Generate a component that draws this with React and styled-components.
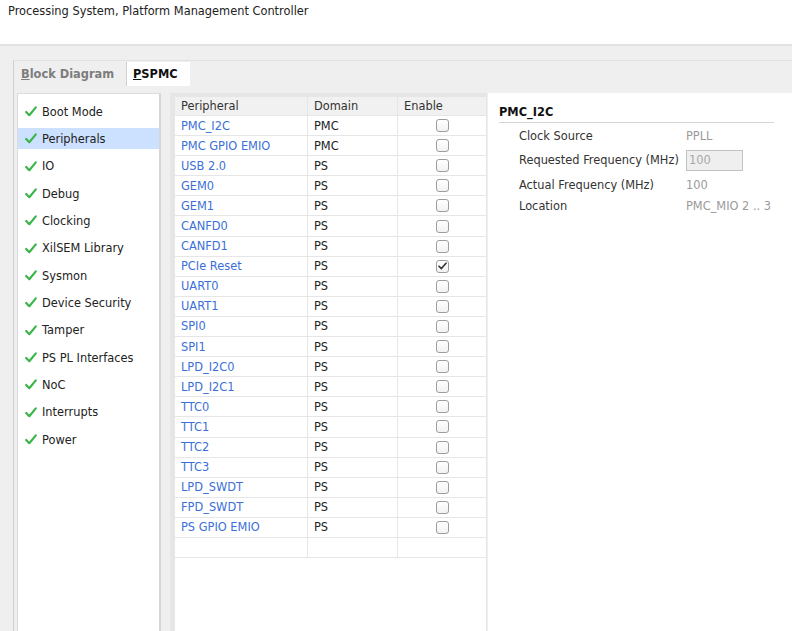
import React from "react";
import styled, { createGlobalStyle } from "styled-components";

const GlobalStyle = createGlobalStyle`
  html, body { margin: 0; padding: 0; }
  body {
    font-family: "DejaVu Sans", "Liberation Sans", sans-serif;
    font-size: 11.4px;
    color: #222;
    background: #efefef;
  }
`;

const Page = styled.div`
  width: 792px;
  height: 631px;
  overflow: hidden;
  display: flex;
  flex-direction: column;
  background: #efefef;
`;

const Header = styled.div`
  height: 46px;
  background: #fff;
  border-bottom: 2px solid #e2e2e2;
  padding: 3px 8px 0;
  box-sizing: border-box;
  line-height: 16px;
  color: #222;
`;

const Body = styled.div`
  flex: 1;
  padding: 14px 0 0 13px;
  display: flex;
  flex-direction: column;
  min-height: 0;
`;

const TabFrame = styled.div`
  flex: 1;
  border-left: 1px solid #cfcfcf;
  border-top: 1px solid #e2e2e2;
  display: flex;
  flex-direction: column;
  min-height: 0;
`;

const TabBar = styled.div`
  height: 25px;
  display: flex;
  align-items: stretch;
  padding-top: 1px;
  box-sizing: border-box;
`;

const Tab = styled.div`
  display: flex;
  align-items: center;
  white-space: nowrap;
  padding-left: ${(p) => (p.$active ? "6px" : "7px")};
  width: ${(p) => (p.$active ? "64px" : "112px")};
  box-sizing: border-box;
  background: ${(p) => (p.$active ? "#fff" : "transparent")};
  color: ${(p) => (p.$active ? "#111" : "#7d7d7d")};
  font-weight: bold;
  border-left: ${(p) => (p.$active ? "1px solid #cfcfcf" : "none")};
  u { text-decoration: underline; }
`;

const TabBody = styled.div`
  flex: 1;
  display: flex;
  padding: 7px 0 0 3px;
  min-height: 0;
`;

const NavPanel = styled.div`
  width: 144px;
  box-sizing: border-box;
  background: #fff;
  border: 1px solid #dcdcdc;
  border-right: 2px solid #d6d6d6;
  border-bottom: none;
  padding-top: 7px;
`;

const NavItem = styled.div`
  height: 21px;
  margin-bottom: 6.35px;
  display: flex;
  align-items: center;
  padding-left: 7px;
  gap: 5px;
  background: ${(p) => (p.$selected ? "#cce0ff" : "transparent")};
  color: #222;
`;

const CheckIcon = styled.svg`
  width: 12px;
  height: 11px;
  flex: none;
`;

const TablePanel = styled.div`
  margin-left: 9px;
  width: 317px;
  box-sizing: border-box;
  background: #e6e6e6;
  padding: 4px 1px 0 5px;
  display: flex;
  flex-direction: column;
`;

const Table = styled.div`
  flex: 1;
  background: #fff;
  display: flex;
  flex-direction: column;
`;

const Row = styled.div`
  display: grid;
  grid-template-columns: 133px 90px 88px;
  height: ${(p) => (p.$head ? "19px" : "20.1px")};
  flex: none;
  box-sizing: border-box;
  border-bottom: 1px solid #e6e6e6;
  background: ${(p) => (p.$head ? "#f1f1f1" : "#fff")};
  color: ${(p) => (p.$head ? "#333" : "#222")};
`;

const Cell = styled.div`
  display: flex;
  align-items: center;
  justify-content: ${(p) => (p.$center ? "center" : "flex-start")};
  padding-left: ${(p) => (p.$center ? "0" : "6px")};
  border-right: ${(p) => (p.$last ? "none" : "1px solid #e6e6e6")};
  color: ${(p) => (p.$link ? "#3b6fd8" : "inherit")};
  white-space: nowrap;
  overflow: hidden;
`;

const CheckBox = styled.div`
  width: 11px;
  height: 11px;
  border: 1px solid #9d9d9d;
  border-radius: 3px;
  background: linear-gradient(#ffffff, #f2f2f2);
  display: flex;
  align-items: center;
  justify-content: center;
`;

const RightPanel = styled.div`
  flex: 1;
  margin-left: 1px;
  background: #fff;
  padding: 11px 18px 0 11px;
`;

const SectionTitle = styled.div`
  font-weight: bold;
  color: #111;
  line-height: 16px;
  padding-bottom: 2px;
  border-bottom: 1px solid #d4d4d4;
  margin-bottom: 3px;
`;

const PropGrid = styled.div`
  display: grid;
  grid-template-columns: 167px 1fr;
  padding-left: 20px;
`;

const PropLabel = styled.div`
  height: ${(p) => p.$h}px;
  display: flex;
  align-items: center;
  color: #333;
`;

const PropValue = styled.div`
  height: ${(p) => p.$h}px;
  display: flex;
  align-items: center;
  color: #9a9a9a;
`;

const ValueBox = styled.div`
  width: 57px;
  height: 21px;
  box-sizing: border-box;
  border: 1px solid #c2c2c2;
  background: #efefef;
  color: #a8a8a8;
  padding-left: 2px;
  display: flex;
  align-items: center;
`;

const navItems = [
  "Boot Mode",
  "Peripherals",
  "IO",
  "Debug",
  "Clocking",
  "XilSEM Library",
  "Sysmon",
  "Device Security",
  "Tamper",
  "PS PL Interfaces",
  "NoC",
  "Interrupts",
  "Power",
];

const peripherals = [
  ["PMC_I2C", "PMC", false],
  ["PMC GPIO EMIO", "PMC", false],
  ["USB 2.0", "PS", false],
  ["GEM0", "PS", false],
  ["GEM1", "PS", false],
  ["CANFD0", "PS", false],
  ["CANFD1", "PS", false],
  ["PCIe Reset", "PS", true],
  ["UART0", "PS", false],
  ["UART1", "PS", false],
  ["SPI0", "PS", false],
  ["SPI1", "PS", false],
  ["LPD_I2C0", "PS", false],
  ["LPD_I2C1", "PS", false],
  ["TTC0", "PS", false],
  ["TTC1", "PS", false],
  ["TTC2", "PS", false],
  ["TTC3", "PS", false],
  ["LPD_SWDT", "PS", false],
  ["FPD_SWDT", "PS", false],
  ["PS GPIO EMIO", "PS", false],
];

const GreenCheck = () => (
  <CheckIcon viewBox="0 0 12 11">
    <path d="M1.2 6 L4.3 9.2 L10.8 1.4" fill="none" stroke="#3bb54a" strokeWidth="2.2" strokeLinecap="round" strokeLinejoin="round" />
  </CheckIcon>
);

const TickMark = () => (
  <svg width="9" height="8" viewBox="0 0 9 8">
    <path d="M1 4.2 L3.4 6.6 L8 1.2" fill="none" stroke="#333" strokeWidth="1.6" strokeLinecap="round" strokeLinejoin="round" />
  </svg>
);

export default function App() {
  return (
    <>
      <GlobalStyle />
      <Page>
        <Header>Processing System, Platform Management Controller</Header>
        <Body>
          <TabFrame>
            <TabBar>
              <Tab>
                <span><u>B</u>lock Diagram</span>
              </Tab>
              <Tab $active>
                <span><u>P</u>SPMC</span>
              </Tab>
            </TabBar>
            <TabBody>
              <NavPanel>
                {navItems.map((n) => (
                  <NavItem key={n} $selected={n === "Peripherals"}>
                    <GreenCheck />
                    <span>{n}</span>
                  </NavItem>
                ))}
              </NavPanel>
              <TablePanel>
                <Table>
                  <Row $head>
                    <Cell>Peripheral</Cell>
                    <Cell>Domain</Cell>
                    <Cell $last>Enable</Cell>
                  </Row>
                  {peripherals.map(([name, domain, on]) => (
                    <Row key={name}>
                      <Cell $link>{name}</Cell>
                      <Cell>{domain}</Cell>
                      <Cell $last $center>
                        <CheckBox>{on && <TickMark />}</CheckBox>
                      </Cell>
                    </Row>
                  ))}
                  <Row>
                    <Cell />
                    <Cell />
                    <Cell $last />
                  </Row>
                </Table>
              </TablePanel>
              <RightPanel>
                <SectionTitle>PMC_I2C</SectionTitle>
                <PropGrid>
                  <PropLabel $h={20}>Clock Source</PropLabel>
                  <PropValue $h={20}>PPLL</PropValue>
                  <PropLabel $h={28}>Requested Frequency (MHz)</PropLabel>
                  <PropValue $h={28}>
                    <ValueBox>100</ValueBox>
                  </PropValue>
                  <PropLabel $h={21}>Actual Frequency (MHz)</PropLabel>
                  <PropValue $h={21}>100</PropValue>
                  <PropLabel $h={21}>Location</PropLabel>
                  <PropValue $h={21}>PMC_MIO 2 .. 3</PropValue>
                </PropGrid>
              </RightPanel>
            </TabBody>
          </TabFrame>
        </Body>
      </Page>
    </>
  );
}
